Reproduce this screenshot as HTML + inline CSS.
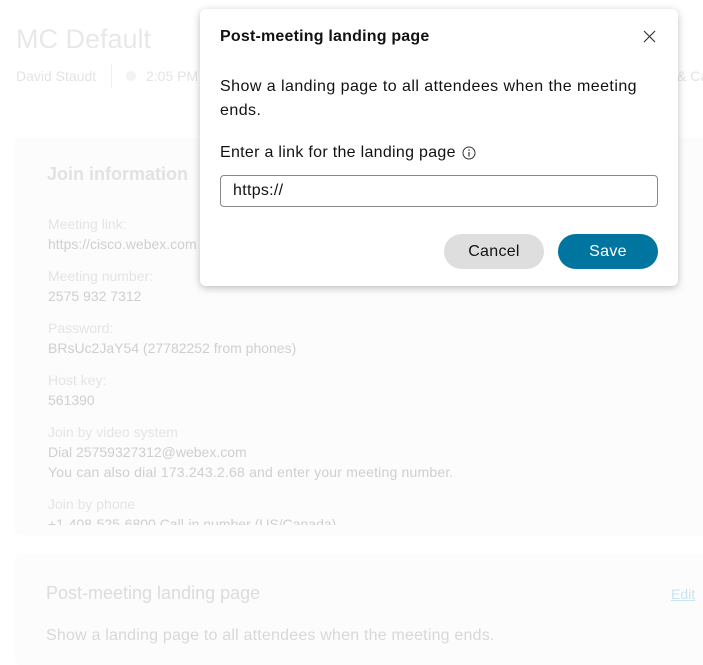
<!DOCTYPE html>
<html><head><style>
body{margin:0;width:703px;height:649px;overflow:hidden;background:#fff;font-family:"Liberation Sans",sans-serif;position:relative}
.a{position:absolute;white-space:nowrap}
.card{position:absolute;background:#fcfcfc;border-radius:6px;box-shadow:0 0 4px rgba(0,0,0,0.02)}
.lb{color:#e4e4e4;font-size:14px}
.vl{color:#cfcfcf;font-size:14px}
.modal{position:absolute;left:200px;top:9px;width:478px;height:277px;background:#fff;border-radius:6px;box-shadow:0 2px 8px rgba(0,0,0,0.25)}
.btn{position:absolute;top:225px;width:100px;height:35px;border-radius:18px;font-size:16px;text-align:center;line-height:35px;letter-spacing:0.3px}
</style></head><body>
<div class="a" style="left:16px;top:24px;font-size:27px;color:#e8e8e8">MC Default</div>
<div class="a" style="left:16px;top:68px;font-size:14px;color:#e4e4e4">David Staudt</div>
<div class="a" style="left:111px;top:64px;width:1px;height:24px;background:#f0f0f0"></div>
<div class="a" style="left:126px;top:71px;width:10px;height:10px;border-radius:50%;background:#f2f2f2"></div>
<div class="a" style="left:146px;top:68px;font-size:14px;color:#e4e4e4">2:05 PM</div>
<div class="a" style="left:677px;top:68px;font-size:14px;color:#e4e4e4">&amp; Ca</div>
<div class="card" style="left:15px;top:138px;width:700px;height:397px"></div>
<div class="a" style="left:47px;top:164px;font-size:18px;color:#e2e2e2;font-weight:bold">Join information</div>
<div class="a lb" style="left:48px;top:216px">Meeting link:</div>
<div class="a vl" style="left:48px;top:236px">https://cisco.webex.com</div>
<div class="a lb" style="left:48px;top:268px">Meeting number:</div>
<div class="a vl" style="left:48px;top:288px">2575 932 7312</div>
<div class="a lb" style="left:48px;top:320px">Password:</div>
<div class="a vl" style="left:48px;top:340px">BRsUc2JaY54 (27782252 from phones)</div>
<div class="a lb" style="left:48px;top:372px">Host key:</div>
<div class="a vl" style="left:48px;top:392px">561390</div>
<div class="a lb" style="left:48px;top:424px">Join by video system</div>
<div class="a vl" style="left:48px;top:444px">Dial 25759327312@webex.com</div>
<div class="a vl" style="left:48px;top:464px;letter-spacing:0.2px">You can also dial 173.243.2.68 and enter your meeting number.</div>
<div class="a lb" style="left:48px;top:496px">Join by phone</div>
<div class="a vl" style="left:48px;top:516px;height:9px;overflow:hidden">+1-408-525-6800 Call-in number (US/Canada)</div>
<div class="card" style="left:15px;top:555px;width:700px;height:110px"></div>
<div class="a" style="left:46px;top:583px;font-size:18px;color:#dcdcdc">Post-meeting landing page</div>
<div class="a" style="left:671px;top:586px;font-size:14px;color:#c8e4ee;text-decoration:underline">Edit</div>
<div class="a" style="left:46px;top:627px;font-size:16px;color:#d8d8d8;letter-spacing:0.2px">Show a landing page to all attendees when the meeting ends.</div>
<div class="modal">
<div class="a" style="left:20px;top:19px;font-size:16px;font-weight:bold;color:#121212;letter-spacing:0.2px">Post-meeting landing page</div>
<svg class="a" style="left:443px;top:21px" width="13" height="13" viewBox="0 0 13 13"><path d="M1 1L12 12M12 1L1 12" stroke="#333" stroke-width="1.2"/></svg>
<div class="a" style="left:20px;top:66px;font-size:16px;line-height:24px;color:#121212;white-space:normal;width:430px;letter-spacing:0.45px">Show a landing page to all attendees when the meeting ends.</div>
<div class="a" style="left:20px;top:135px;font-size:16px;color:#121212;letter-spacing:0.3px">Enter a link for the landing page</div>
<svg class="a" style="left:262px;top:137px" width="14" height="14" viewBox="0 0 14 14"><circle cx="7" cy="7" r="6" fill="none" stroke="#333" stroke-width="1"/><path d="M7 6v4.5" stroke="#333" stroke-width="1.2"/><circle cx="7" cy="4" r="0.8" fill="#333"/></svg>
<div class="a" style="left:20px;top:166px;width:436px;height:30px;border:1px solid #888;border-radius:4px"></div>
<div class="a" style="left:33px;top:173px;font-size:16px;color:#121212;letter-spacing:0.3px">https://</div>
<div class="btn" style="left:244px;background:#dedede;color:#121212">Cancel</div>
<div class="btn" style="left:358px;background:#0075a0;color:#fff">Save</div>
</div>
</body></html>
